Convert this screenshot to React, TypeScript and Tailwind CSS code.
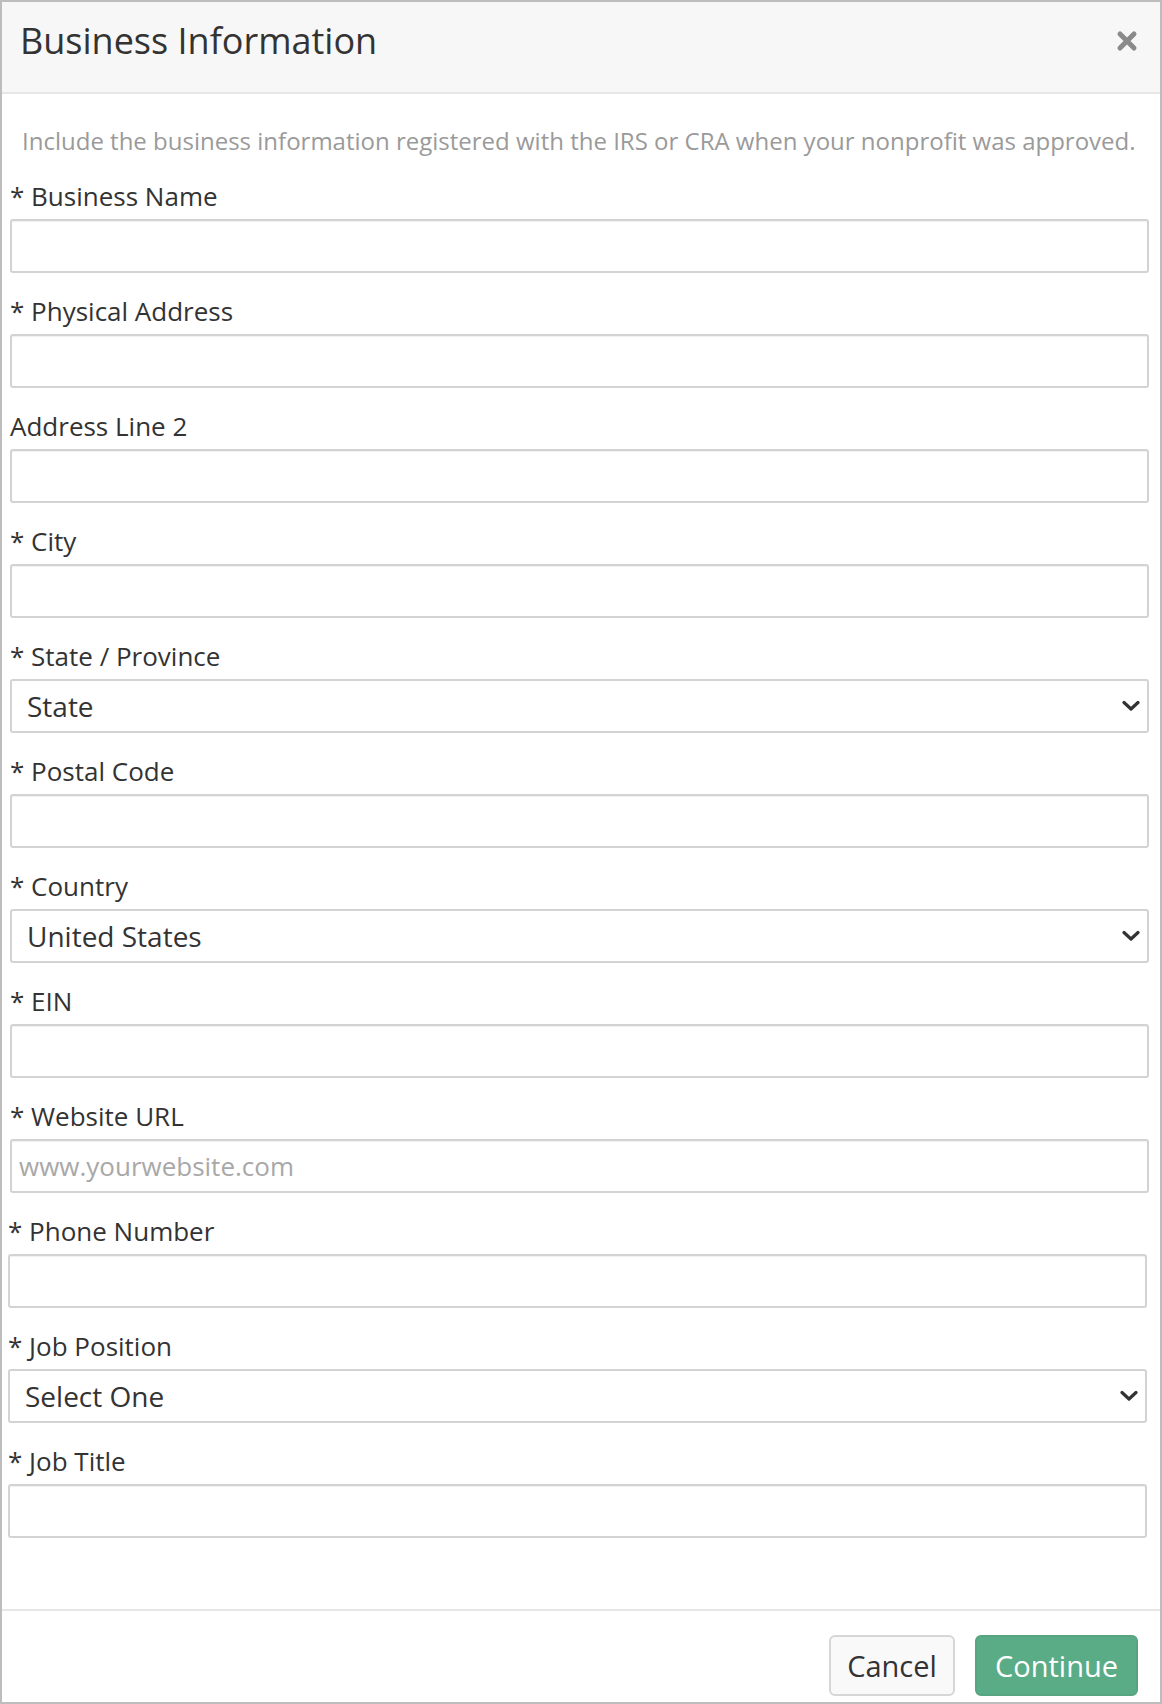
import React from "react";

type Field = {
  label: string;
  required?: boolean;
  kind?: "input" | "select";
  value?: string;
  placeholder?: string;
  shift?: boolean;
};

const fields: Field[] = [
  { label: "Business Name", required: true },
  { label: "Physical Address", required: true },
  { label: "Address Line 2" },
  { label: "City", required: true },
  { label: "State / Province", required: true, kind: "select", value: "State" },
  { label: "Postal Code", required: true },
  { label: "Country", required: true, kind: "select", value: "United States" },
  { label: "EIN", required: true },
  { label: "Website URL", required: true, placeholder: "www.yourwebsite.com" },
  { label: "Phone Number", required: true, shift: true },
  { label: "Job Position", required: true, kind: "select", value: "Select One", shift: true },
  { label: "Job Title", required: true, shift: true },
];

const Chevron = () => (
  <svg width="18" height="12" viewBox="0 0 18 12" className="text-[#333]">
    <path d="M2 2.5 L9 9 L16 2.5" fill="none" stroke="currentColor" strokeWidth="3.2" strokeLinecap="round" strokeLinejoin="round" />
  </svg>
);

const FormField: React.FC<{ field: Field }> = ({ field }) => (
  <div className={`flex flex-col ${field.shift ? "-ml-[2px] mr-[2px]" : ""}`}>
    <label className="text-[26px] leading-[32px] text-[#333] mb-[7px]">
      {field.required ? "* " : ""}
      {field.label}
    </label>
    {field.kind === "select" ? (
      <div className="h-[54px] border-2 border-[#d3d3d3] rounded-[3px] bg-white flex items-center justify-between pl-[15px] pr-[7px]">
        <span className="text-[28px] text-[#333]">{field.value}</span>
        <Chevron />
      </div>
    ) : (
      <input
        className="h-[54px] border-2 border-[#d3d3d3] rounded-[3px] bg-white px-[7px] text-[26px] text-[#333] placeholder:text-[#a8a8a8] outline-none shadow-[inset_0_1px_1px_rgba(0,0,0,0.06)]"
        placeholder={field.placeholder}
      />
    )}
  </div>
);

export default function App() {
  return (
    <div className="w-[1162px] h-[1704px] bg-white border-2 border-[#bdbdbd] flex flex-col" style={{ fontFamily: '"Open Sans", "Liberation Sans", sans-serif' }}>
      <header className="h-[92px] bg-[#f7f7f7] border-b-2 border-[#e6e6e6] flex items-center justify-between pl-[18px] pr-[22px] pb-[12px]">
        <h1 className="text-[36px] text-[#333] font-normal">Business Information</h1>
        <svg width="22" height="22" viewBox="0 0 22 22" className="text-[#8a8a8a]">
          <path d="M4 4 L18 18 M18 4 L4 18" stroke="currentColor" strokeWidth="5" strokeLinecap="round" />
        </svg>
      </header>
      <main className="flex-1 pl-[8px] pr-[11px] pt-[32px]">
        <p className="text-[24px] leading-[30px] text-[#9a9a9a] pl-[12px] mb-[24px] whitespace-nowrap">
          Include the business information registered with the IRS or CRA when your nonprofit was approved.
        </p>
        <div className="flex flex-col gap-[22px]">
          {fields.map((f) => (
            <FormField key={f.label} field={f} />
          ))}
        </div>
      </main>
      <footer className="h-[93px] border-t-2 border-[#e6e6e6] flex items-start justify-end gap-[20px] pt-[24px] pr-[22px]">
        <button className="w-[126px] h-[61px] bg-[#f9f9f9] border-2 border-[#d6d6d6] rounded-[6px] text-[29px] text-[#333]">Cancel</button>
        <button className="w-[163px] h-[61px] bg-[#5aac86] border-2 border-[#56a580] rounded-[6px] text-[29px] text-white">Continue</button>
      </footer>
    </div>
  );
}
